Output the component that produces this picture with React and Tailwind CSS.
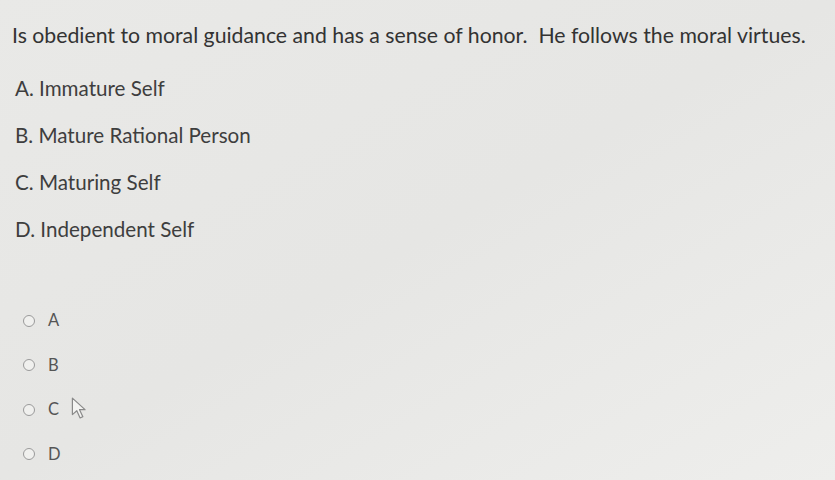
import React from 'react';

const choices = ['A. Immature Self', 'B. Mature Rational Person', 'C. Maturing Self', 'D. Independent Self'];
const radios = ['A', 'B', 'C', 'D'];

const Cursor = () => (
    <svg width="16" height="22" viewBox="0 0 14 20" className="ml-[12px] -mt-[4px]">
        <path d="M1 1 L1 16 L5 12.5 L8 19 L10.5 18 L7.5 11.5 L12.5 11.5 Z" fill="#f4f4f2" stroke="#8a8a8a" strokeWidth="1.1" strokeLinejoin="round" />
    </svg>
);

export default function App() {
    return (
        <div
            className="w-[835px] h-[480px] overflow-hidden bg-gradient-to-br from-[#e9e9e7] via-[#e6e6e4] to-[#eeeeec] text-[#3c3c3c]"
            style={{ fontFamily: 'Lato, "Open Sans", sans-serif' }}
        >
            <div className="pl-[12px] pt-[21px] text-[21.25px] leading-[28px] text-[#333] whitespace-nowrap">
                Is obedient to moral guidance and has a sense of honor.&nbsp; He follows the moral virtues.
            </div>
            <div className="pl-[15px] pt-[25px] flex flex-col gap-[19px]">
                {choices.map((c) => (
                    <div key={c} className="text-[20.6px] leading-[28px] text-[#3e3e3e]">{c}</div>
                ))}
            </div>
            <div className="pl-[23px] pt-[67px] flex flex-col gap-[23.5px]">
                {radios.map((r) => (
                    <div key={r} className="flex items-center h-[21px]">
                        <span className="w-[12px] h-[12px] rounded-full border border-[#9a9a9a] bg-[#f0f0ee]" />
                        <span className="ml-[13px] text-[16.5px] text-[#555]">{r}</span>
                        {r === 'C' && <Cursor />}
                    </div>
                ))}
            </div>
        </div>
    );
}
